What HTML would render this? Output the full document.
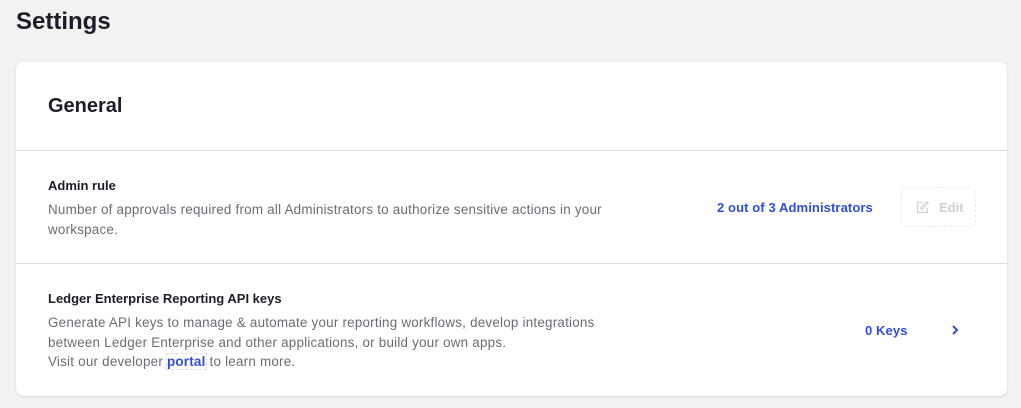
<!DOCTYPE html>
<html><head><style>
*{margin:0;padding:0;box-sizing:border-box}
body{width:1021px;height:408px;background:#f2f2f2;font-family:"Liberation Sans",sans-serif;color:#1c1d26;position:relative;overflow:hidden}
.abs{position:absolute;white-space:nowrap}
h1{position:absolute;left:16px;top:8px;font-size:24px;font-weight:600;color:#1c1d26}
.card{position:absolute;left:16px;top:62px;width:991px;height:334px;background:#fff;border-radius:8px;box-shadow:0 1px 2px rgba(0,0,0,.12)}
.hr{position:absolute;left:0;right:0;height:1px;background:#dcdcdc}
.t{font-size:13px;font-weight:700;color:#1c1d26}
.d{font-size:13.4px;letter-spacing:0.23px;color:#6b6c75;line-height:19.5px}
.b{color:#2f4de0;font-weight:700;font-size:13px;letter-spacing:0.1px}
</style></head><body>
<h1>Settings</h1>
<div class="card">
<div class="abs" style="left:32px;top:33px;font-size:20px;font-weight:600">General</div>
<div class="hr" style="top:88px"></div>
<div class="abs t" style="left:32px;top:116px">Admin rule</div>
<div class="abs d" style="left:32px;top:138px">Number of approvals required from all Administrators to authorize sensitive actions in your<br>workspace.</div>
<div class="abs b" style="left:701px;top:138px">2 out of 3 Administrators</div>
<div class="abs" style="left:885px;top:125px;width:75px;height:40px;border:1px dashed #ececec;border-radius:5px;color:#d0d0d4;font-size:13px;font-weight:700">
<svg style="position:absolute;left:14px;top:13px" width="13" height="13" viewBox="0 0 13 13" fill="none" stroke="#d0d0d4" stroke-width="1.2"><path d="M6 1.5H1.5v10h10V7"/><path d="M5 8l.5-2L11 .8l1.2 1.2L6.9 7.5z"/></svg>
<span style="position:absolute;left:37px;top:12px">Edit</span></div>
<div class="hr" style="top:201px"></div>
<div class="abs t" style="left:32px;top:229px">Ledger Enterprise Reporting API keys</div>
<div class="abs d" style="left:32px;top:251px">Generate API keys to manage &amp; automate your reporting workflows, develop integrations<br>between Ledger Enterprise and other applications, or build your own apps.<br>Visit our developer <span style="color:#2f4de0;font-weight:700;outline:1px dashed #ddd">portal</span> to learn more.</div>
<div class="abs b" style="left:849px;top:261px">0 Keys</div>
<svg class="abs" style="left:934px;top:262px" width="10" height="12" viewBox="0 0 10 12" fill="none" stroke="#2f4de0" stroke-width="2"><path d="M3 2l4 4-4 4"/></svg>
</div>
</body></html>
